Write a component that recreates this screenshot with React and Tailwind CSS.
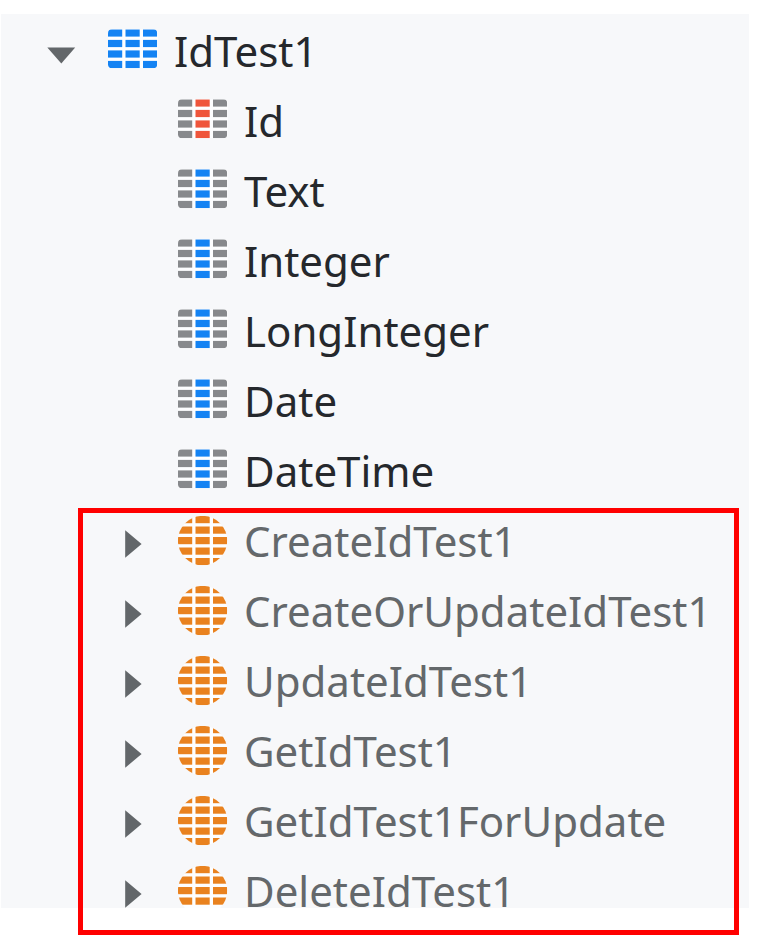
const attributes = [
    { name: 'Id', isIdentifier: true },
    { name: 'Text' },
    { name: 'Integer' },
    { name: 'LongInteger' },
    { name: 'Date' },
    { name: 'DateTime' },
];

const actions = [
    'CreateIdTest1',
    'CreateOrUpdateIdTest1',
    'UpdateIdTest1',
    'GetIdTest1',
    'GetIdTest1ForUpdate',
    'DeleteIdTest1',
];

const COLUMNS = [0, 17.5, 35];
const ROWS = [0, 10.5, 21, 31.5];

// 3x4 grid, the middle column can have its own color
function TableIcon({ side, middle, clip }) {
    return (
        <svg width="50" height="40" viewBox="0 0 50 40" className="block shrink-0">
            <clipPath id={clip}>
                <rect x="0" y="0.3" width="49.2" height="39" rx="4" />
            </clipPath>
            <rect x="-1" y="0.5" width="51" height="38.5" rx="4" fill="#fdfeff" />
            <g clipPath={`url(#${clip})`}>
                {ROWS.map((y) => COLUMNS.map((x, i) => (
                    <rect key={`${x}-${y}`} x={x} y={y + 0.4} width="14.2" height="7.2" fill={i === 1 ? middle : side} />
                )))}
            </g>
        </svg>
    );
}

function ActionIcon({ clip }) {
    return (
        <svg width="50" height="50" viewBox="0 0 50 50" className="block shrink-0">
            <clipPath id={clip}>
                <circle cx="24.6" cy="24.6" r="24.7" />
            </clipPath>
            <circle cx="24.6" cy="24.6" r="24.7" fill="#fdfeff" />
            <g clipPath={`url(#${clip})`} fill="#e9821f">
                {[...ROWS, 42].map((y) => COLUMNS.map((x) => (
                    <rect key={`${x}-${y}`} x={x} y={y} width="14.2" height="7.2" />
                )))}
            </g>
        </svg>
    );
}

export default function App() {
    return (
        <div className="relative w-[769px] h-[944px] bg-white pt-[14px] pl-px font-['Noto_Sans',sans-serif] text-[42px] leading-[70px] text-[#25282c] whitespace-nowrap">
            <div className="w-[748px] h-[894px] bg-[#f7f8fa] pt-[2px] overflow-hidden">
                <div className="flex h-[70px] pl-[46px]">
                    <svg width="29" height="17" viewBox="0 0 29 17" className="block shrink-0 mt-[31px]">
                        <path d="M0.3 0.4H28.2L14.3 16.6Z" fill="#63676a" />
                    </svg>
                    <div className="mt-[13px] ml-[32px] w-[66px]">
                        <TableIcon side="#1483f3" middle="#1483f3" clip="entity" />
                    </div>
                    <span>IdTest1</span>
                </div>

                {attributes.map((attr) => (
                    <div key={attr.name} className="flex h-[70px] pl-[177px]">
                        <div className="mt-[13px] w-[66px]">
                            <TableIcon
                                side="#87898c"
                                middle={attr.isIdentifier ? '#ef553b' : '#1483f3'}
                                clip={`attr-${attr.name}`}
                            />
                        </div>
                        <span>{attr.name}</span>
                    </div>
                ))}

                {actions.map((name) => (
                    <div key={name} className="flex h-[70px] pl-[124px] text-[#64686b]">
                        <svg width="17" height="28" viewBox="0 0 17 28" className="block shrink-0 mt-[24px]">
                            <path d="M0.2 0.3L16.6 14L0.2 27.8Z" fill="#63676a" />
                        </svg>
                        <div className="mt-[10px] ml-[36px] w-[66px]">
                            <ActionIcon clip={`action-${name}`} />
                        </div>
                        <span>{name}</span>
                    </div>
                ))}
            </div>

            {/* Highlight around the generated actions */}
            <div className="absolute left-[78px] top-[508px] w-[661px] h-[427px] border-[5px] border-[#ff0000]" />
        </div>
    );
}
